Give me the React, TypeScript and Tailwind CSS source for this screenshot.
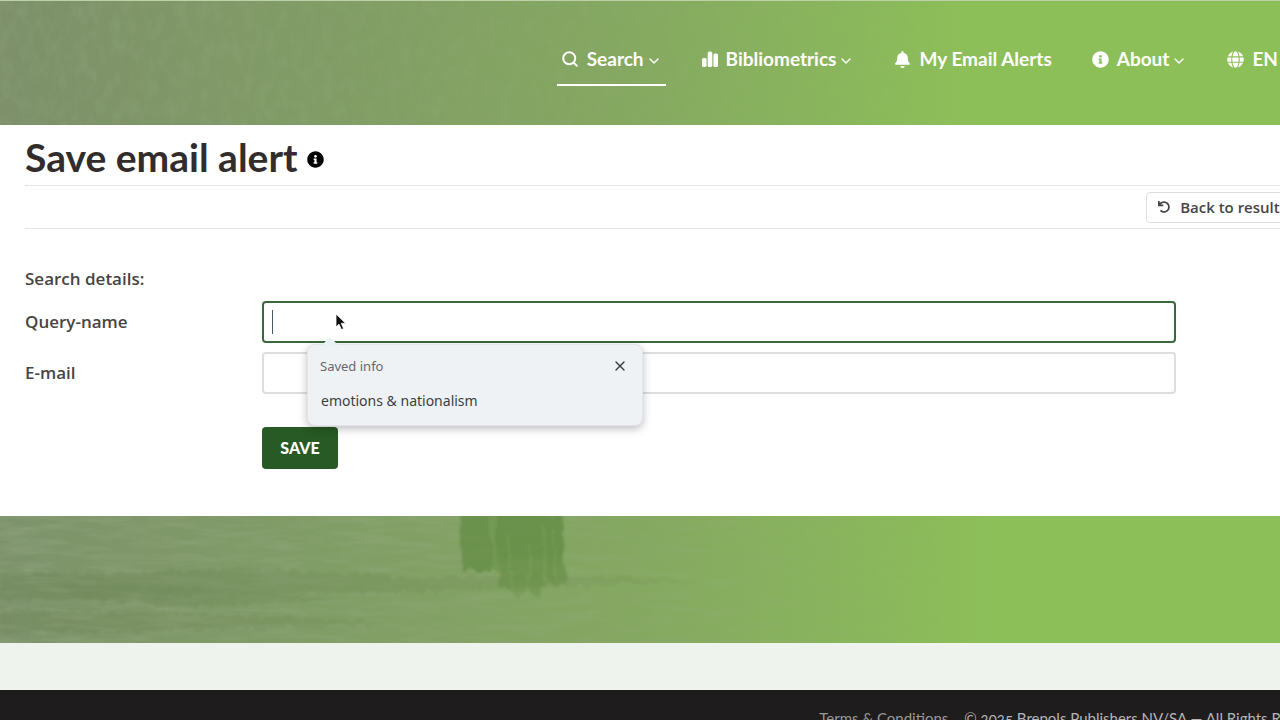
import React, { useState } from 'react';
import { FaBell, FaGlobe, FaInfoCircle, FaUndo } from 'react-icons/fa';
import { FiChevronDown, FiSearch, FiX } from 'react-icons/fi';

const BarsIcon: React.FC = () => (
  <svg viewBox="0 0 16 16" className="h-4 w-4 shrink-0" fill="currentColor" aria-hidden="true">
    <rect x="0" y="7" width="4.6" height="9" rx="1.6" />
    <rect x="5.7" y="0.5" width="4.6" height="15.5" rx="1.6" />
    <rect x="11.4" y="2.5" width="4.6" height="13.5" rx="1.6" />
  </svg>
);

interface NavItemProps {
  label: string;
  icon: React.ReactNode;
  hasMenu?: boolean;
  active?: boolean;
}

const NavItem: React.FC<NavItemProps> = ({ label, icon, hasMenu, active }) => (
  <a
    href="#"
    className={`flex h-[52px] items-center border-b-2 px-1 text-[19px] font-bold ${active ? 'border-white' : 'border-transparent'}`}
  >
    {icon}
    <span className="ml-2">{label}</span>
    {hasMenu && <FiChevronDown className="mt-1 ml-0.5 h-4 w-4 shrink-0" />}
  </a>
);

interface PaintProps {
  id: string;
  grain: string;
  meadow?: boolean;
}

// Painted canvas that fades out to flat green on the right
const Paint: React.FC<PaintProps> = ({ id, grain, meadow }) => (
  <svg className="absolute inset-0 h-full w-full" viewBox="0 0 1280 127" preserveAspectRatio="none" aria-hidden="true">
    <defs>
      <filter id={`${id}-grain`} x="0" y="0" width="100%" height="100%">
        <feTurbulence type="fractalNoise" baseFrequency={grain} numOctaves="4" seed="7" />
        <feColorMatrix values="0 0 0 0 0.32  0 0 0 0 0.42  0 0 0 0 0.25  1.6 0 0 0 -0.62" />
      </filter>
      <filter id={`${id}-rough`} x="-10%" y="-10%" width="120%" height="120%">
        <feTurbulence type="fractalNoise" baseFrequency="0.12 0.04" numOctaves="3" seed="3" />
        <feDisplacementMap in="SourceGraphic" scale="11" />
        <feGaussianBlur stdDeviation="1" />
      </filter>
      <linearGradient id={`${id}-fade`}>
        <stop offset="0" stopColor="#fff" />
        <stop offset="0.45" stopColor="#fff" stopOpacity="0.6" />
        <stop offset="0.74" stopColor="#fff" stopOpacity="0" />
      </linearGradient>
      <linearGradient id={`${id}-trunk`} x1="0" y1="0" x2="0" y2="1">
        <stop offset="0.5" stopColor="#5c873d" stopOpacity="0.65" />
        <stop offset="1" stopColor="#5c873d" stopOpacity="0.3" />
      </linearGradient>
      <mask id={`${id}-mask`}>
        <rect width="1280" height="127" fill={`url(#${id}-fade)`} />
      </mask>
    </defs>
    <g mask={`url(#${id}-mask)`}>
      <rect width="1280" height="127" filter={`url(#${id}-grain)`} opacity={meadow ? 0.6 : 0.35} />
      {meadow && (
        <g filter={`url(#${id}-rough)`} fill="#617a48" opacity="0.4">
          <path d="M0 56 L90 58 L240 52 L420 62 L560 58 L700 66 L560 70 L420 76 L260 78 L120 82 L0 84 Z" opacity="0.6" />
          <path d="M0 92 L80 96 L250 100 L400 106 L240 114 L0 118 Z" opacity="0.5" />
          <path d="M60 68 L200 72 L340 84 L200 90 L80 84 Z" opacity="0.6" />
        </g>
      )}
    </g>
    {meadow && (
      <g filter={`url(#${id}-rough)`}>
        <path d="M460 -8 L490 -8 L492 56 L461 54 Z" fill="#5c873d" opacity="0.6" />
        <path d="M496 -8 L560 -8 L566 60 L562 70 L546 66 L536 80 L528 74 L518 82 L508 72 L498 70 Z" fill={`url(#${id}-trunk)`} />
        <path d="M490 -8 L497 -8 L497 54 L491 54 Z" fill="#5c873d" opacity="0.35" />
        <path d="M552 -8 L555 66 M508 20 L512 76 M531 30 L528 74 M543 10 L545 68" stroke="#86ab5d" strokeWidth="1.5" opacity="0.4" />
      </g>
    )}
  </svg>
);

const App: React.FC = () => {
  const [queryName, setQueryName] = useState('');
  const [email, setEmail] = useState('');
  const [showSaved, setShowSaved] = useState(true);

  const pickSaved = () => {
    setQueryName('emotions & nationalism');
    setShowSaved(false);
  };

  return (
    <div className="flex h-screen flex-col overflow-hidden bg-white font-['Open_Sans',sans-serif] text-[#474543]">
      {/* Top banner */}
      <header className="relative h-[125px] shrink-0 border-t border-[#bdd0a8] bg-linear-to-r from-[#7d906a] via-[#85a861] via-48% to-[#8dbf59] to-76%">
        <Paint id="top" grain="0.09 0.05" />
        <nav className="relative -mr-5 flex justify-end gap-8 pt-[33px] font-[Lato,sans-serif] whitespace-nowrap text-white">
          <NavItem label="Search" icon={<FiSearch strokeWidth={2.6} className="h-[18px] w-[18px] shrink-0" />} hasMenu active />
          <NavItem label="Bibliometrics" icon={<BarsIcon />} hasMenu />
          <NavItem label="My Email Alerts" icon={<FaBell className="h-[17px] w-[17px] shrink-0" />} />
          <NavItem label="About" icon={<FaInfoCircle className="h-[17px] w-[17px] shrink-0" />} hasMenu />
          <NavItem label="EN" icon={<FaGlobe className="h-[17px] w-[17px] shrink-0" />} hasMenu />
        </nav>
      </header>

      {/* Alert form */}
      <main className="h-[391px] shrink-0 pl-[25px]">
        <div className="flex h-[61px] items-center gap-2.5 border-b border-[#e4e4e4] pt-1">
          <h1 className="font-[Lato,sans-serif] text-[39px] leading-[52px] font-bold text-[#322d2c]">Save email alert</h1>
          <FaInfoCircle className="mt-1 h-[17px] w-[17px] text-black" />
        </div>

        <div className="flex h-[43px] items-center justify-end border-b border-[#e4e4e4]">
          <button className="-mr-[19px] flex h-[31px] items-center gap-2.5 rounded-sm border border-[#dedede] px-[11px] text-[15px] font-semibold whitespace-nowrap">
            <FaUndo className="h-3 w-3" />
            Back to results
          </button>
        </div>

        <form className="mr-[104px] pt-[38px]" onSubmit={(e) => e.preventDefault()}>
          <h2 className="text-[17px] leading-6 font-semibold">Search details:</h2>

          <div className="mt-[10px] flex items-center">
            <label htmlFor="query-name" className="w-[237px] shrink-0 text-[17px] leading-6 font-semibold">Query-name</label>
            <div className="relative flex-1">
              <input
                id="query-name"
                type="text"
                value={queryName}
                autoComplete="off"
                onChange={(e) => setQueryName(e.target.value)}
                className="block h-[42px] w-full rounded-sm border-2 border-[#39683a] bg-white px-2 caret-transparent outline-none"
              />
              <span className="absolute top-[9px] left-[10px] h-6 w-px bg-[#4a5a66]" />
              <svg viewBox="0 0 12 18" className="absolute top-3 left-[73px] h-[18px] w-3" aria-hidden="true">
                <path d="M1 1 L1 14 L4 11.2 L6.4 16.6 L8.6 15.6 L6.3 10.4 L10.5 10.2 Z" fill="#111" stroke="#fff" strokeWidth="0.8" />
              </svg>

              {/* Autofill popup */}
              {showSaved && (
                <div className="absolute top-[43px] left-[45px] z-10 h-[82px] w-[336px] rounded-lg border border-[#e3e4e8] bg-[#eff2f5] font-['Noto_Sans',sans-serif] shadow-[0_3px_8px_rgba(0,0,0,0.25)]">
                  <svg viewBox="0 0 18 9" className="absolute -top-2 left-[13px] h-[9px] w-[18px]" aria-hidden="true">
                    <path d="M0 9 L7 2 Q9 0 11 2 L18 9 Z" fill="#eaf1f4" />
                  </svg>
                  <div className="flex items-center justify-between pt-[11px] pr-[14px] pl-3">
                    <span className="text-[13px] leading-5 text-[#66696d]">Saved info</span>
                    <button type="button" aria-label="Close" onClick={() => setShowSaved(false)}>
                      <FiX className="h-4 w-4 text-[#3c3c3c]" />
                    </button>
                  </div>
                  <button type="button" onClick={pickSaved} className="mt-[13px] block w-full px-[13px] text-left text-sm leading-6 text-[#3c3e42]">
                    emotions &amp; nationalism
                  </button>
                </div>
              )}
            </div>
          </div>

          <div className="mt-[9px] flex items-center">
            <label htmlFor="email" className="w-[237px] shrink-0 text-[17px] leading-6 font-semibold">E-mail</label>
            <input
              id="email"
              type="email"
              value={email}
              onChange={(e) => setEmail(e.target.value)}
              className="h-[42px] min-w-0 flex-1 rounded-sm border-2 border-[#dedede] bg-white px-2 outline-none"
            />
          </div>

          <button type="submit" className="mt-[33px] ml-[237px] h-[42px] w-[76px] rounded-sm bg-[#285a25] font-[Lato,sans-serif] text-base font-black text-white">
            SAVE
          </button>
        </form>
      </main>

      {/* Bottom banner */}
      <div className="relative h-[127px] shrink-0 bg-linear-to-r from-[#7d926b] via-[#85a861] via-50% to-[#8dbf59] to-78%">
        <Paint id="bottom" grain="0.02 0.13" meadow />
      </div>
      <div className="h-[47px] shrink-0 bg-[#eef3ed]" />

      <footer className="flex min-h-0 flex-1 items-start justify-end bg-[#1f1c1d] pt-[18px] font-[Lato,sans-serif] text-[15px] leading-5 whitespace-nowrap text-[#b5b3b3]">
        <div className="-mr-[52px] flex gap-4">
          <a href="#" className="text-[#9a9898]">Terms &amp; Conditions</a>
          <span className="oldstyle-nums">© 2025 Brepols Publishers NV/SA — All Rights Reserved</span>
        </div>
      </footer>
    </div>
  );
};

export default App;
